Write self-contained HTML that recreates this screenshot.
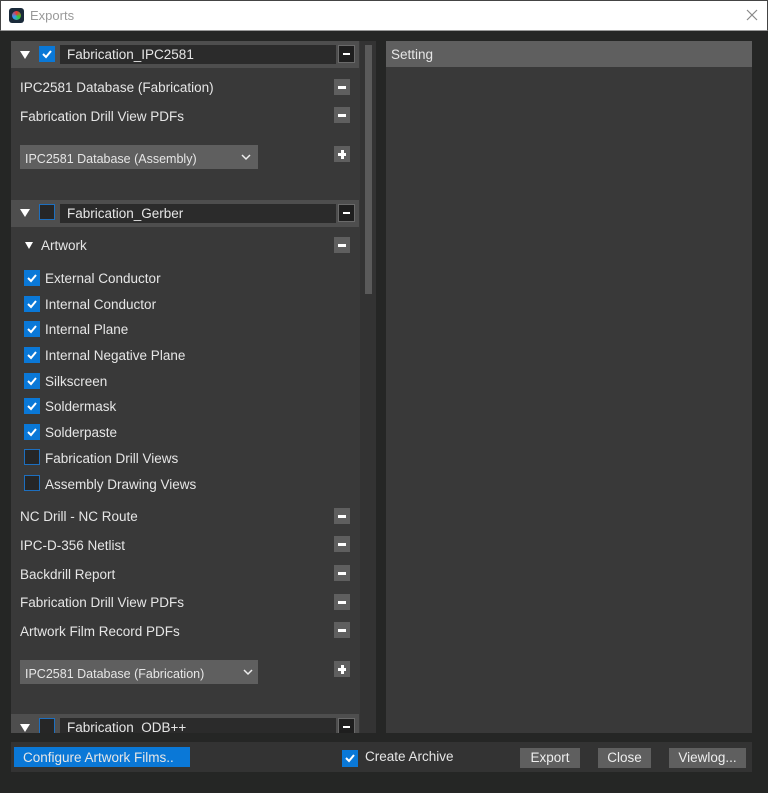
<!DOCTYPE html>
<html><head><meta charset="utf-8"><style>
*{box-sizing:border-box;margin:0;padding:0}
body{width:768px;height:793px;background:#252625;font-family:"Liberation Sans",sans-serif;font-size:13.5px;color:#e6e6e6;position:relative;overflow:hidden}
.a{position:absolute}
.t{position:absolute;white-space:nowrap;line-height:16px}
.mb{position:absolute;width:16px;height:16px;background:#5f5f5f}
.mb::after{content:"";position:absolute;left:4px;top:7px;width:8px;height:3px;background:#fff}
.hm{position:absolute;width:17px;height:18px;background:#1e1e1e;border:1px solid #6a6a6a}
.hm::after{content:"";position:absolute;left:4px;top:7px;width:7px;height:2px;background:#fff}
.pb{position:absolute;width:16px;height:16px;background:#5f5f5f}
.pb::before{content:"";position:absolute;left:4px;top:7px;width:8px;height:3px;background:#fff}
.pb::after{content:"";position:absolute;left:6.5px;top:4px;width:3px;height:9px;background:#fff}
.cb{position:absolute;width:16px;height:16px;background:#0a78d7}
.cb svg{position:absolute;left:2px;top:2px}
.ucb{position:absolute;width:16px;height:16px;background:#262626;border:1px solid #1d6fbf}
.tri{position:absolute;width:0;height:0;border-left:5px solid transparent;border-right:5px solid transparent;border-top:8px solid #fff}
.dd{position:absolute;background:#5f5f5f;height:24px}
.btn{position:absolute;background:#5f5f5f;height:20px;text-align:center;line-height:20px;color:#eee}
.hn{font-size:13.5px}
.ddt{font-size:12.5px}
</style></head><body>
<div class="a" style="left:0;top:0;width:768px;height:31px;background:#fff;border:1px solid #444;border-bottom:1px solid #999"></div>
<div class="a" style="left:9px;top:8px;width:15px;height:15px;background:#1a2a3a;border-radius:3px"><div class="a" style="left:3px;top:3px;width:9px;height:9px;border-radius:50%;background:conic-gradient(#e33,#3c3,#39f,#e33)"></div></div>
<div class="t" style="left:30px;top:8px;color:#999;font-size:13px">Exports</div>
<svg class="a" style="left:746px;top:9px" width="12" height="12"><path d="M1 1L11 11M11 1L1 11" stroke="#888" stroke-width="1.2"/></svg>

<div class="a" style="left:11px;top:41px;width:349px;height:692px;background:#393939"></div>
<div class="a" style="left:360px;top:41px;width:16px;height:692px;background:#333"></div>
<div class="a" style="left:365px;top:45px;width:7px;height:249px;background:#5a5a5a"></div>

<div class="a" style="left:11px;top:41px;width:348px;height:27px;background:#4e4e4e"></div>
<div class="tri" style="left:20px;top:51px"></div>
<div class="cb" style="left:39px;top:46px"><svg width="12" height="12"><path d="M2 6L5 9L10 3" stroke="#fff" stroke-width="2" fill="none"/></svg></div>
<div class="a" style="left:60px;top:45px;width:276px;height:19px;background:#2b2b2b"></div>
<div class="t hn" style="left:67px;top:47px">Fabrication_IPC2581</div>
<div class="hm" style="left:338px;top:45px"></div>

<div class="t" style="left:20px;top:80px">IPC2581 Database (Fabrication)</div><div class="mb" style="left:334px;top:79px"></div>
<div class="t" style="left:20px;top:109px">Fabrication Drill View PDFs</div><div class="mb" style="left:334px;top:107px"></div>
<div class="dd" style="left:20px;top:145px;width:238px"></div>
<div class="t ddt" style="left:25px;top:151px">IPC2581 Database (Assembly)</div>
<svg class="a" style="left:241px;top:154px" width="10" height="7"><path d="M1 1L5 5L9 1" stroke="#eee" stroke-width="1.5" fill="none"/></svg>
<div class="pb" style="left:334px;top:146px"></div>

<div class="a" style="left:11px;top:200px;width:348px;height:27px;background:#4e4e4e"></div>
<div class="tri" style="left:20px;top:209px"></div>
<div class="ucb" style="left:39px;top:204px"></div>
<div class="a" style="left:60px;top:204px;width:276px;height:19px;background:#2b2b2b"></div>
<div class="t hn" style="left:67px;top:206px">Fabrication_Gerber</div>
<div class="hm" style="left:338px;top:204px"></div>

<div class="tri" style="left:25px;top:242px;border-top-width:7px;border-left-width:4.5px;border-right-width:4.5px"></div>
<div class="t" style="left:41px;top:238px">Artwork</div><div class="mb" style="left:334px;top:237px"></div>

<div class="cb" style="left:24px;top:270px"><svg width="12" height="12"><path d="M2 6L5 9L10 3" stroke="#fff" stroke-width="2" fill="none"/></svg></div><div class="t" style="left:45px;top:271px">External Conductor</div>
<div class="cb" style="left:24px;top:296px"><svg width="12" height="12"><path d="M2 6L5 9L10 3" stroke="#fff" stroke-width="2" fill="none"/></svg></div><div class="t" style="left:45px;top:297px">Internal Conductor</div>
<div class="cb" style="left:24px;top:321px"><svg width="12" height="12"><path d="M2 6L5 9L10 3" stroke="#fff" stroke-width="2" fill="none"/></svg></div><div class="t" style="left:45px;top:322px">Internal Plane</div>
<div class="cb" style="left:24px;top:347px"><svg width="12" height="12"><path d="M2 6L5 9L10 3" stroke="#fff" stroke-width="2" fill="none"/></svg></div><div class="t" style="left:45px;top:348px">Internal Negative Plane</div>
<div class="cb" style="left:24px;top:373px"><svg width="12" height="12"><path d="M2 6L5 9L10 3" stroke="#fff" stroke-width="2" fill="none"/></svg></div><div class="t" style="left:45px;top:374px">Silkscreen</div>
<div class="cb" style="left:24px;top:398px"><svg width="12" height="12"><path d="M2 6L5 9L10 3" stroke="#fff" stroke-width="2" fill="none"/></svg></div><div class="t" style="left:45px;top:399px">Soldermask</div>
<div class="cb" style="left:24px;top:424px"><svg width="12" height="12"><path d="M2 6L5 9L10 3" stroke="#fff" stroke-width="2" fill="none"/></svg></div><div class="t" style="left:45px;top:425px">Solderpaste</div>
<div class="ucb" style="left:24px;top:449px"></div><div class="t" style="left:45px;top:451px">Fabrication Drill Views</div>
<div class="ucb" style="left:24px;top:475px"></div><div class="t" style="left:45px;top:477px">Assembly Drawing Views</div>

<div class="t" style="left:20px;top:509px">NC Drill - NC Route</div><div class="mb" style="left:334px;top:508px"></div>
<div class="t" style="left:20px;top:538px">IPC-D-356 Netlist</div><div class="mb" style="left:334px;top:536px"></div>
<div class="t" style="left:20px;top:567px">Backdrill Report</div><div class="mb" style="left:334px;top:565px"></div>
<div class="t" style="left:20px;top:595px">Fabrication Drill View PDFs</div><div class="mb" style="left:334px;top:594px"></div>
<div class="t" style="left:20px;top:624px">Artwork Film Record PDFs</div><div class="mb" style="left:334px;top:622px"></div>
<div class="dd" style="left:20px;top:660px;width:238px"></div>
<div class="t ddt" style="left:25px;top:666px">IPC2581 Database (Fabrication)</div>
<svg class="a" style="left:243px;top:669px" width="10" height="7"><path d="M1 1L5 5L9 1" stroke="#eee" stroke-width="1.5" fill="none"/></svg>
<div class="pb" style="left:334px;top:661px"></div>

<div class="a" style="left:11px;top:714px;width:348px;height:19px;background:#4e4e4e;overflow:hidden">
<div class="tri" style="left:9px;top:10px"></div>
<div class="ucb" style="left:28px;top:4px;height:20px"></div>
<div class="a" style="left:49px;top:4px;width:276px;height:19px;background:#2b2b2b"></div>
<div class="t hn" style="left:56px;top:6px;color:#e6e6e6">Fabrication_ODB++</div>
<div class="hm" style="left:327px;top:4px"></div>
</div>

<div class="a" style="left:386px;top:41px;width:366px;height:692px;background:#393939"></div>
<div class="a" style="left:386px;top:41px;width:366px;height:26px;background:#5f5f5f"></div>
<div class="t" style="left:391px;top:47px">Setting</div>

<div class="a" style="left:11px;top:742px;width:741px;height:30px;background:#333"></div>
<div class="a" style="left:14px;top:747px;width:176px;height:20px;background:#0a78d7"></div>
<div class="t" style="left:23px;top:750px">Configure Artwork Films..</div>
<div class="cb" style="left:342px;top:750px;height:17px"><svg width="12" height="12"><path d="M2 6L5 9L10 3" stroke="#fff" stroke-width="2" fill="none"/></svg></div>
<div class="t" style="left:365px;top:749px">Create Archive</div>
<div class="btn" style="left:520px;top:748px;width:60px">Export</div>
<div class="btn" style="left:598px;top:748px;width:53px">Close</div>
<div class="btn" style="left:669px;top:748px;width:77px">Viewlog...</div>
</body></html>
